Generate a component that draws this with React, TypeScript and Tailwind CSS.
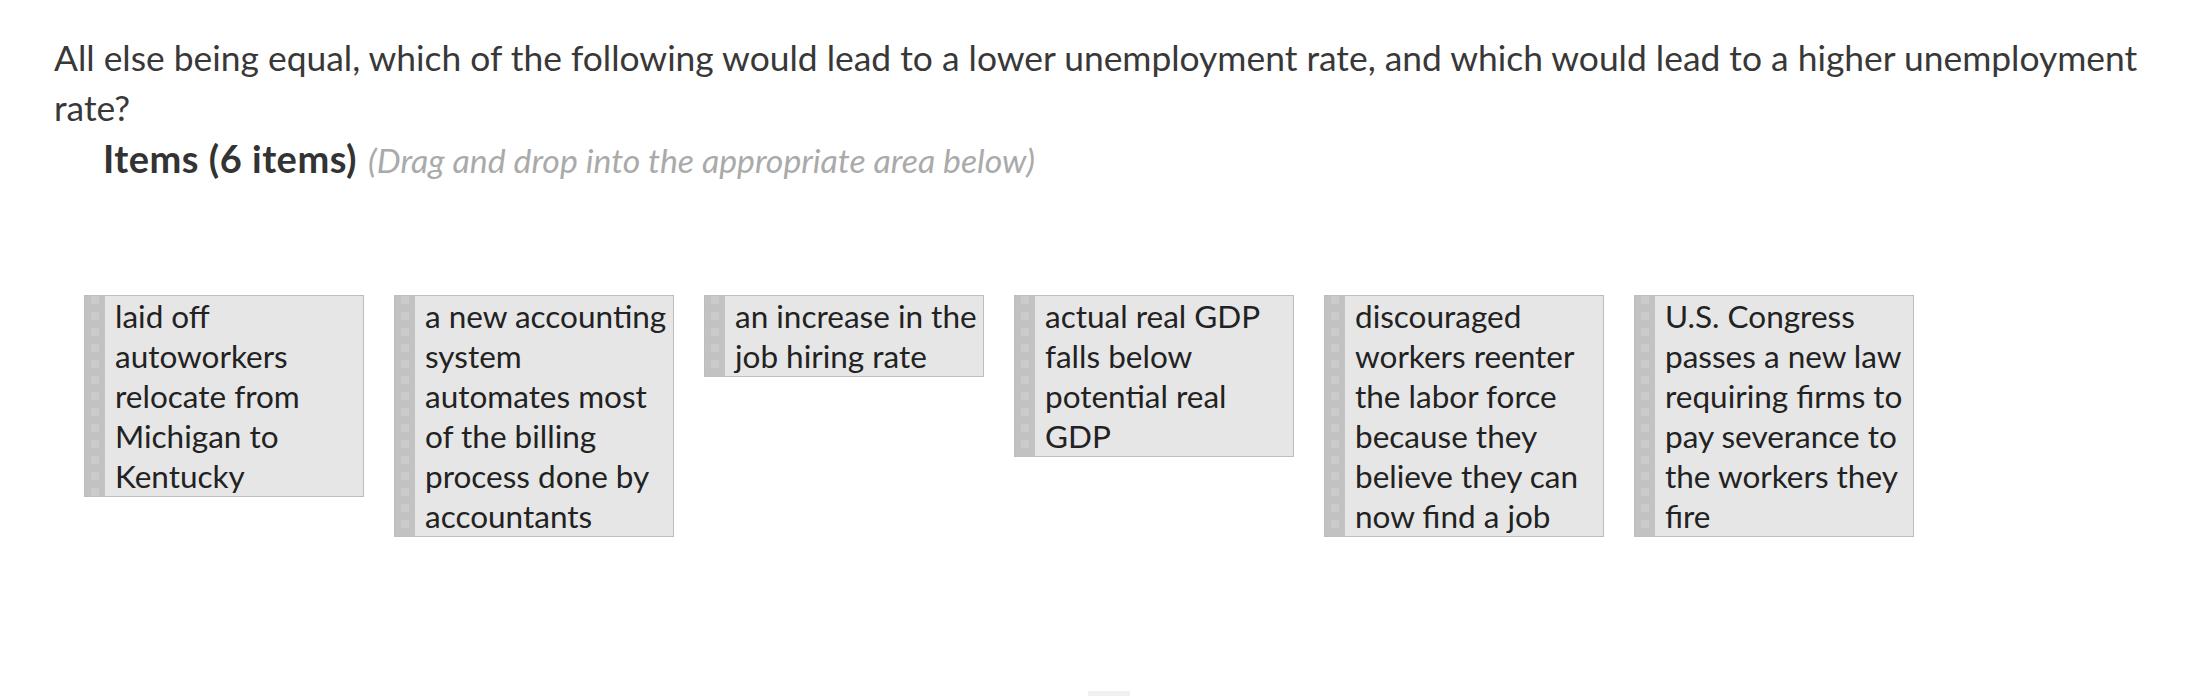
import React from 'react';

const items: string[] = [
  'laid off autoworkers relocate from Michigan to Kentucky',
  'a new accounting system automates most of the billing process done by accountants',
  'an increase in the job hiring rate',
  'actual real GDP falls below potential real GDP',
  'discouraged workers reenter the labor force because they believe they can now find a job',
  'U.S. Congress passes a new law requiring firms to pay severance to the workers they fire',
];

const App: React.FC = () => {
  return (
    <div className="h-[696px] w-full overflow-hidden bg-white px-[54px] pt-[33px] font-['Lato','Liberation_Sans',sans-serif]">
      <p className="text-[35.4px] leading-[50px] text-[#383838]">
        All else being equal, which of the following would lead to a lower unemployment rate, and which would lead to a higher unemployment rate?
      </p>
      <div className="ml-[49px] flex items-baseline gap-[11px] leading-[50px]">
        <span className="text-[38px] font-bold text-[#333] tracking-[0.5px]">Items (6 items)</span>
        <span className="text-[33.8px] italic text-[#aaaaaa]">(Drag and drop into the appropriate area below)</span>
      </div>
      <div className="ml-[30px] mt-[110px] flex items-start gap-[30px]">
        {items.map((text) => (
          <div key={text} className="w-[280px] flex border-[1.5px] border-[#bdbdbd] bg-[#e6e6e6]">
            {/* grip strip */}
            <div className="w-[20px] shrink-0 self-stretch bg-[#c2c2c2] bg-[linear-gradient(#cbcbcb_50%,transparent_50%)] bg-[length:8px_16px] bg-repeat-y bg-[position:6px_0px]" />
            <div className="pl-[10px] pr-[2px] text-[31.5px] leading-[40px] text-[#222]">{text}</div>
          </div>
        ))}
      </div>
      <div className="mt-[154px] ml-[1034px] w-[42px] h-[6px] bg-[#f0f0f0]" />
    </div>
  );
};

export default App;
